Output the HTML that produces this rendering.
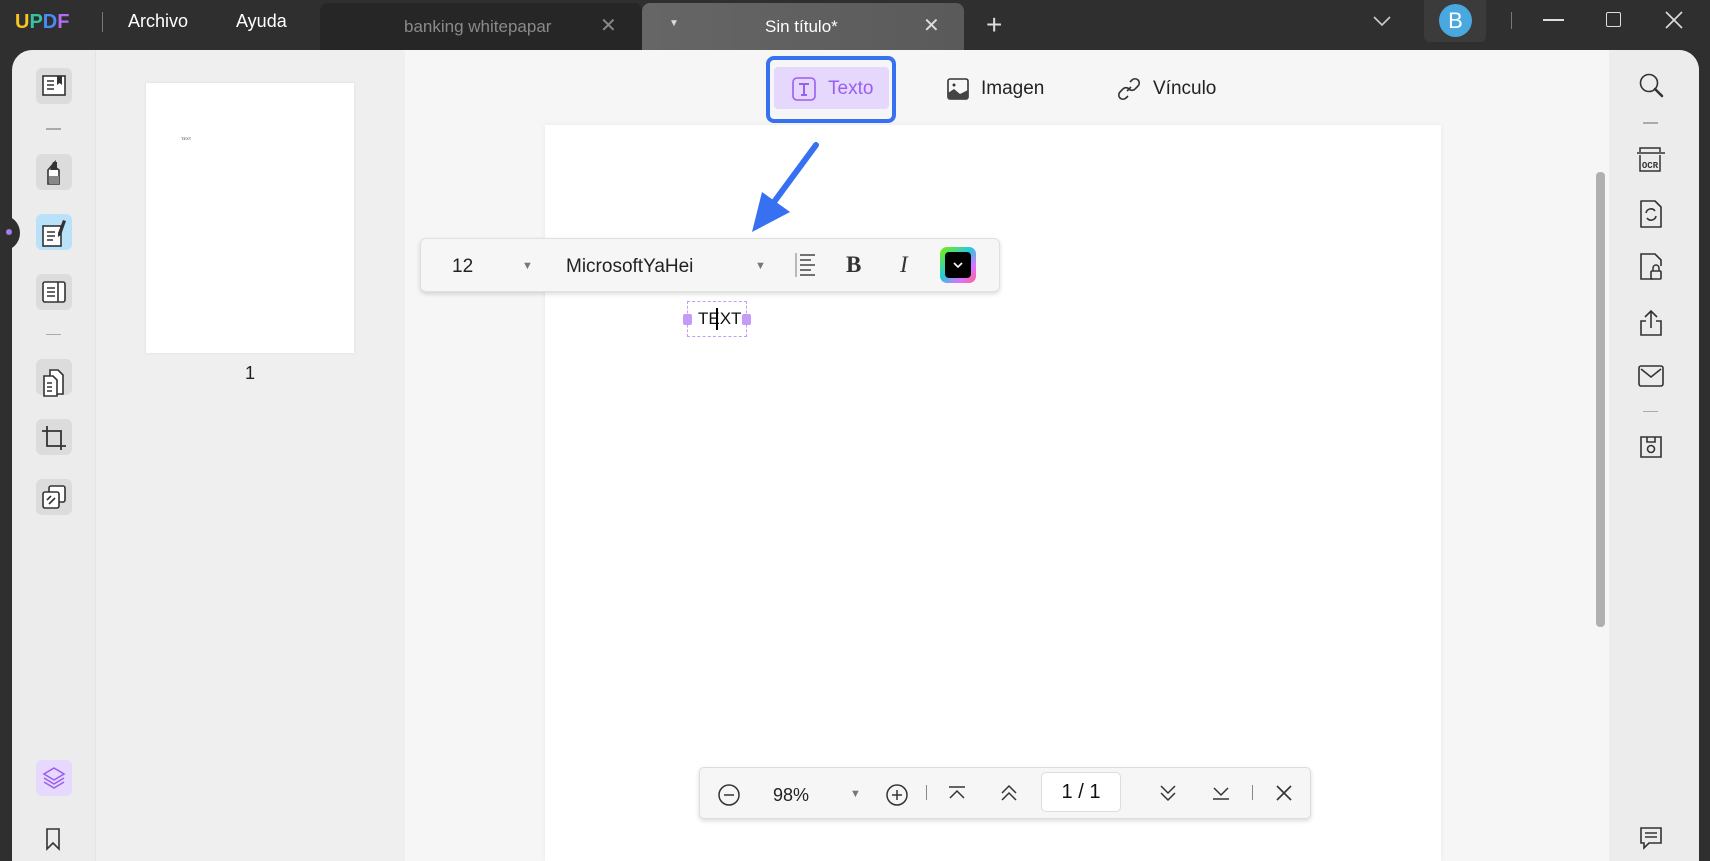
<!DOCTYPE html>
<html><head><meta charset="utf-8"><style>
*{margin:0;padding:0;box-sizing:border-box}
body{width:1710px;height:861px;background:#2f2f2f;position:relative;overflow:hidden;font-family:"Liberation Sans",sans-serif}
.a{position:absolute}
.t{color:#fff;font-size:18px}
.ic{position:absolute;width:36px;height:36px;border-radius:6px;background:#dcdcdc;left:36px}
svg{position:absolute;overflow:visible}
</style></head><body>
<!-- title bar -->
<div class="a" style="left:15px;top:11px;font-weight:bold;font-size:20px;letter-spacing:0px"><span style="color:#f7c325">U</span><span style="color:#37c3a0">P</span><span style="color:#4a8cf7">D</span><span style="color:#b46cf2">F</span></div>
<div class="a" style="left:102px;top:12px;width:1px;height:20px;background:#777"></div>
<div class="a t" style="left:128px;top:11px">Archivo</div>
<div class="a t" style="left:236px;top:11px">Ayuda</div>
<div class="a" style="left:320px;top:3px;width:322px;height:47px;background:#262626;border-radius:8px 8px 0 0"></div>
<div class="a" style="left:404px;top:17px;font-size:17px;color:#8a8a8a">banking whitepapar</div>
<div class="a" style="left:600px;top:13px;font-size:20px;color:#888">✕</div>
<div class="a" style="left:642px;top:3px;width:322px;height:47px;background:linear-gradient(90deg,#666,#5a5a5a);border-radius:8px 8px 0 0"></div>
<div class="a" style="left:669px;top:18px;font-size:10px;color:#ddd">▼</div>
<div class="a t" style="left:765px;top:17px;font-size:17px">Sin título*</div>
<div class="a" style="left:923px;top:13px;font-size:20px;color:#ddd">✕</div>
<div class="a" style="left:986px;top:9px;font-size:28px;color:#ddd;font-weight:300">+</div>
<svg style="left:1373px;top:15px" width="18" height="12"><path d="M1 2l8 8 8-8" fill="none" stroke="#ccc" stroke-width="1.6"/></svg>
<div class="a" style="left:1424px;top:0;width:62px;height:42px;background:#3b3b3b;border-radius:0 0 6px 6px"></div>
<div class="a" style="left:1439px;top:4px;width:33px;height:33px;border-radius:50%;background:#4aa8e0;color:#fff;font-size:22px;text-align:center;line-height:33px">B</div>
<div class="a" style="left:1511px;top:12px;width:1px;height:17px;background:#777"></div>
<div class="a" style="left:1543px;top:19px;width:21px;height:2px;background:#ddd"></div>
<div class="a" style="left:1606px;top:12px;width:15px;height:15px;border:1.6px solid #ddd;border-radius:2px"></div>
<svg style="left:1666px;top:12px" width="16" height="16"><path d="M0 0L16 16M16 0L0 16" stroke="#ddd" stroke-width="1.6"/></svg>

<!-- main panel -->
<div class="a" style="left:12px;top:50px;width:1687px;height:811px;background:#ececec;border-radius:20px 20px 0 0;overflow:hidden">
  <div class="a" style="left:83px;top:0;width:310px;height:811px;background:#efefef;border-left:1px solid #e4e4e4"></div>
  <div class="a" style="left:393px;top:0;width:1204px;height:811px;background:#f6f6f6"></div>
</div>
<div class="a" style="left:0;top:215px;width:20px;height:36px;border-radius:0 18px 18px 0;background:#2f2f2f"></div>
<div class="a" style="left:6px;top:229px;width:6px;height:6px;border-radius:50%;background:#a67cf0"></div>

<!-- left icons -->
<div class="ic" style="top:68px"></div>
<svg style="left:41px;top:73px" width="26" height="26"><rect x="2" y="3" width="22" height="19" fill="#fff" stroke="#333" stroke-width="1.6"/><path d="M6 8h7M6 12h7M6 16h7" stroke="#333" stroke-width="1.6"/><path d="M16 3v9l2.5-2 2.5 2V3z" fill="#333"/></svg>
<div class="a" style="left:46px;top:128px;width:15px;height:2px;background:#aaa"></div>
<div class="ic" style="top:154px"></div>
<svg style="left:43px;top:160px" width="22" height="30"><path d="M5 10l7-8v5l4 3v14H5z" fill="#fff" stroke="#333" stroke-width="1.6"/><path d="M10 2l4 0 0 8-7 0z" fill="#333"/><path d="M6 16h10v8H6z" fill="#888"/></svg>
<div class="ic" style="top:214px;background:#b9e2fa"></div>
<svg style="left:41px;top:219px" width="28" height="28"><rect x="2" y="7" width="18" height="20" fill="#fff" stroke="#333" stroke-width="1.6"/><path d="M6 13h8M6 17h8M6 21h6" stroke="#333" stroke-width="1.6"/><path d="M22 1l3 1-5 14-3 2 0-4z" fill="#333"/></svg>
<div class="ic" style="top:274px"></div>
<svg style="left:41px;top:280px" width="26" height="24"><rect x="2" y="2" width="22" height="20" rx="2" fill="#fff" stroke="#333" stroke-width="1.6"/><path d="M17 2v20M6 8h8M6 12h8M6 16h8" stroke="#333" stroke-width="1.6"/></svg>
<div class="a" style="left:46px;top:334px;width:15px;height:1px;background:#aaa"></div>
<div class="ic" style="top:359px"></div>
<svg style="left:41px;top:368px" width="26" height="28"><path d="M9 2h8l5 5v19H9z" fill="#fff" stroke="#333" stroke-width="1.6"/><path d="M3 8h9l4 4v16H3z" fill="#fff" stroke="#333" stroke-width="1.6"/><path d="M6 15h5M6 19h5M6 23h5" stroke="#333" stroke-width="1.6"/></svg>
<div class="ic" style="top:419px"></div>
<svg style="left:40px;top:424px" width="28" height="28"><path d="M7 2v20h19M2 7h19v19" fill="none" stroke="#333" stroke-width="1.8"/></svg>
<div class="ic" style="top:479px"></div>
<svg style="left:41px;top:484px" width="26" height="26"><rect x="8" y="2" width="16" height="16" rx="2" fill="#fff" stroke="#333" stroke-width="1.6"/><rect x="2" y="8" width="16" height="16" rx="2" fill="#fff" stroke="#333" stroke-width="1.6"/><path d="M6 16l4-4M8 20l6-6" stroke="#333" stroke-width="1.6"/></svg>
<div class="ic" style="top:760px;background:#e6d9fd"></div>
<svg style="left:42px;top:766px" width="24" height="24"><path d="M12 2l10 6-10 6-10-6z" fill="none" stroke="#9a5ef0" stroke-width="1.6"/><path d="M2 12l10 6 10-6M2 16l10 6 10-6" fill="none" stroke="#9a5ef0" stroke-width="1.6"/></svg>
<svg style="left:46px;top:828px" width="14" height="22"><path d="M1 1h12v20l-6-6-6 6z" fill="none" stroke="#333" stroke-width="1.6"/></svg>

<!-- thumbnail -->
<div class="a" style="left:146px;top:83px;width:208px;height:270px;background:#fff;box-shadow:0 0 3px rgba(0,0,0,.08)"></div>
<div class="a" style="left:181px;top:136px;font-size:4px;color:#333">TEXT</div>
<div class="a" style="left:245px;top:363px;font-size:18px;color:#222">1</div>

<!-- top tools -->
<div class="a" style="left:766px;top:56px;width:130px;height:67px;border:4px solid #3870f2;border-radius:8px"></div>
<div class="a" style="left:774px;top:67px;width:115px;height:42px;background:#e6d8fd;border-radius:4px"></div>
<svg style="left:792px;top:77px" width="24" height="24"><rect x="1" y="1" width="22" height="22" rx="4" fill="none" stroke="#9a5ef0" stroke-width="1.6"/><path d="M7 7h10M12 7v11M9 18h6" stroke="#9a5ef0" stroke-width="2"/></svg>
<div class="a" style="left:828px;top:78px;font-size:19px;color:#9a5ef0">Texto</div>
<svg style="left:947px;top:78px" width="22" height="22"><rect x="1" y="1" width="20" height="20" rx="2" fill="none" stroke="#333" stroke-width="1.6"/><circle cx="7" cy="7" r="1.5" fill="#333"/><path d="M1 15l6-4 6 5 8-4v9H1z" fill="#444"/></svg>
<div class="a" style="left:981px;top:78px;font-size:19px;color:#222">Imagen</div>
<svg style="left:1117px;top:77px" width="24" height="24"><path d="M10 14l4-4M13 5l2-2a4 4 0 016 6l-3 3a4 4 0 01-6 0M11 19l-2 2a4 4 0 01-6-6l3-3a4 4 0 016 0" fill="none" stroke="#333" stroke-width="1.6"/></svg>
<div class="a" style="left:1153px;top:78px;font-size:19px;color:#222">Vínculo</div>

<!-- page -->
<div class="a" style="left:545px;top:125px;width:896px;height:736px;background:#fff;box-shadow:0 0 6px rgba(0,0,0,.06)"></div>
<div class="a" style="left:1596px;top:172px;width:9px;height:455px;background:#b0b0b0;border-radius:4px"></div>

<!-- arrow -->
<svg style="left:740px;top:140px" width="90" height="100"><path d="M76 5L34 62" stroke="#3870f2" stroke-width="6" stroke-linecap="round"/><path d="M12 92L22 52 50 72z" fill="#3870f2"/></svg>

<!-- font toolbar -->
<div class="a" style="left:420px;top:238px;width:580px;height:54px;background:#f6f6f6;border:1px solid #e0e0e0;border-radius:6px;box-shadow:0 2px 5px rgba(0,0,0,.15)"></div>
<div class="a" style="left:452px;top:256px;font-size:19px;color:#222">12</div>
<div class="a" style="left:522px;top:260px;font-size:11px;color:#777">▼</div>
<div class="a" style="left:566px;top:256px;font-size:19px;color:#222">MicrosoftYaHei</div>
<div class="a" style="left:755px;top:260px;font-size:11px;color:#777">▼</div>
<svg style="left:795px;top:253px" width="22" height="24"><path d="M1 0v24" stroke="#aaa" stroke-width="1.6"/><path d="M5 2h15M5 7h11M5 12h15M5 17h11M5 22h15" stroke="#444" stroke-width="1.4"/></svg>
<div class="a" style="left:846px;top:252px;font-size:23px;font-weight:bold;color:#333;font-family:'Liberation Serif',serif">B</div>
<div class="a" style="left:900px;top:252px;font-size:23px;font-style:italic;color:#333;font-family:'Liberation Serif',serif">I</div>
<div class="a" style="left:940px;top:247px;width:36px;height:36px;border-radius:7px;background:linear-gradient(135deg,#7ef000,#25c9e0 45%,#e070ff 75%,#ff6080)"></div>
<div class="a" style="left:945px;top:252px;width:26px;height:26px;border-radius:4px;background:#000"></div>
<svg style="left:953px;top:262px" width="10" height="6"><path d="M1 1l4 4 4-4" fill="none" stroke="#fff" stroke-width="1.6"/></svg>

<!-- text box -->
<div class="a" style="left:687px;top:301px;width:60px;height:36px;border:1.5px dashed #c49cf7"></div>
<div class="a" style="left:683px;top:314px;width:9px;height:11px;background:#c49cf7;border-radius:2px"></div>
<div class="a" style="left:742px;top:314px;width:9px;height:11px;background:#c49cf7;border-radius:2px"></div>
<div class="a" style="left:698px;top:309px;font-size:17px;color:#111">TEXT</div>
<div class="a" style="left:716px;top:308px;width:2px;height:22px;background:#000"></div>

<!-- bottom toolbar -->
<div class="a" style="left:699px;top:767px;width:612px;height:52px;background:#f6f6f6;border:1px solid #ddd;border-radius:5px;box-shadow:0 2px 5px rgba(0,0,0,.15)"></div>
<svg style="left:718px;top:784px" width="22" height="22"><circle cx="11" cy="11" r="10" fill="none" stroke="#333" stroke-width="1.5"/><path d="M6 11h10" stroke="#333" stroke-width="1.5"/></svg>
<div class="a" style="left:773px;top:785px;font-size:18px;color:#222">98%</div>
<div class="a" style="left:850px;top:788px;font-size:11px;color:#777">▼</div>
<svg style="left:886px;top:784px" width="22" height="22"><circle cx="11" cy="11" r="10" fill="none" stroke="#333" stroke-width="1.5"/><path d="M6 11h10M11 6v10" stroke="#333" stroke-width="1.5"/></svg>
<div class="a" style="left:926px;top:785px;width:1px;height:15px;background:#888"></div>
<svg style="left:948px;top:786px" width="18" height="14"><path d="M1 1h16M2 12l7-7 7 7" fill="none" stroke="#333" stroke-width="1.5"/></svg>
<svg style="left:1001px;top:784px" width="16" height="18"><path d="M1 9l7-7 7 7M1 16l7-7 7 7" fill="none" stroke="#333" stroke-width="1.5"/></svg>
<div class="a" style="left:1041px;top:772px;width:80px;height:40px;background:#fff;border:1px solid #ddd;border-radius:5px;text-align:center;line-height:38px;font-size:20px;color:#111">1 / 1</div>
<svg style="left:1160px;top:784px" width="16" height="18"><path d="M1 2l7 7 7-7M1 9l7 7 7-7" fill="none" stroke="#333" stroke-width="1.5"/></svg>
<svg style="left:1212px;top:786px" width="18" height="14"><path d="M2 2l7 7 7-7M1 13h16" fill="none" stroke="#333" stroke-width="1.5"/></svg>
<div class="a" style="left:1252px;top:785px;width:1px;height:15px;background:#888"></div>
<svg style="left:1276px;top:785px" width="16" height="16"><path d="M1 1l14 14M15 1L1 15" stroke="#333" stroke-width="1.6"/></svg>

<!-- right sidebar -->
<div class="a" style="left:1609px;top:50px;width:90px;height:811px;background:#ececec;border-radius:0 20px 0 0"></div>
<svg style="left:1639px;top:73px" width="26" height="26"><circle cx="10" cy="10" r="8.5" fill="none" stroke="#333" stroke-width="1.6"/><path d="M16 16l7 7" stroke="#333" stroke-width="2.6" stroke-linecap="round"/></svg>
<div class="a" style="left:1643px;top:122px;width:15px;height:2px;background:#aaa"></div>
<svg style="left:1636px;top:146px" width="30" height="28"><path d="M4 6V2h20v4M1 7h28M4 9v16h20V9" fill="none" stroke="#333" stroke-width="1.5"/><text x="14" y="22" font-size="9" font-family="Liberation Mono" font-weight="bold" text-anchor="middle" fill="#333">OCR</text></svg>
<svg style="left:1639px;top:199px" width="24" height="30"><path d="M2 2h14l6 6v20H2z" fill="none" stroke="#333" stroke-width="1.6" stroke-linejoin="round"/><path d="M7 14a5 5 0 019-2M17 17a5 5 0 01-9 2" fill="none" stroke="#333" stroke-width="1.6"/></svg>
<svg style="left:1639px;top:252px" width="24" height="30"><path d="M14 27H2V2h14l6 6v6" fill="none" stroke="#333" stroke-width="1.6"/><rect x="12" y="19" width="10" height="8" rx="1" fill="none" stroke="#333" stroke-width="1.6"/><path d="M14 19v-3a3 3 0 016 0v3" fill="none" stroke="#333" stroke-width="1.5"/></svg>
<svg style="left:1639px;top:309px" width="24" height="28"><path d="M7 12H2v14h20V12h-5M12 19V2M6 8l6-6 6 6" fill="none" stroke="#333" stroke-width="1.6"/></svg>
<svg style="left:1638px;top:365px" width="26" height="22"><rect x="1" y="1" width="24" height="20" rx="2" fill="none" stroke="#333" stroke-width="1.6"/><path d="M3 4l10 8 10-8" fill="none" stroke="#333" stroke-width="1.6"/></svg>
<div class="a" style="left:1643px;top:411px;width:15px;height:1px;background:#aaa"></div>
<svg style="left:1639px;top:435px" width="24" height="24"><path d="M2 2h20v20H2zM8 2v5h8V2" fill="none" stroke="#333" stroke-width="1.6"/><circle cx="12" cy="14" r="3.5" fill="none" stroke="#333" stroke-width="1.6"/></svg>
<svg style="left:1640px;top:827px" width="22" height="22"><path d="M1 1h20v15H9l-5 5v-5H1z" fill="none" stroke="#333" stroke-width="1.6"/><path d="M5 6h12M5 10h12" stroke="#333" stroke-width="1.5"/></svg>
</body></html>
